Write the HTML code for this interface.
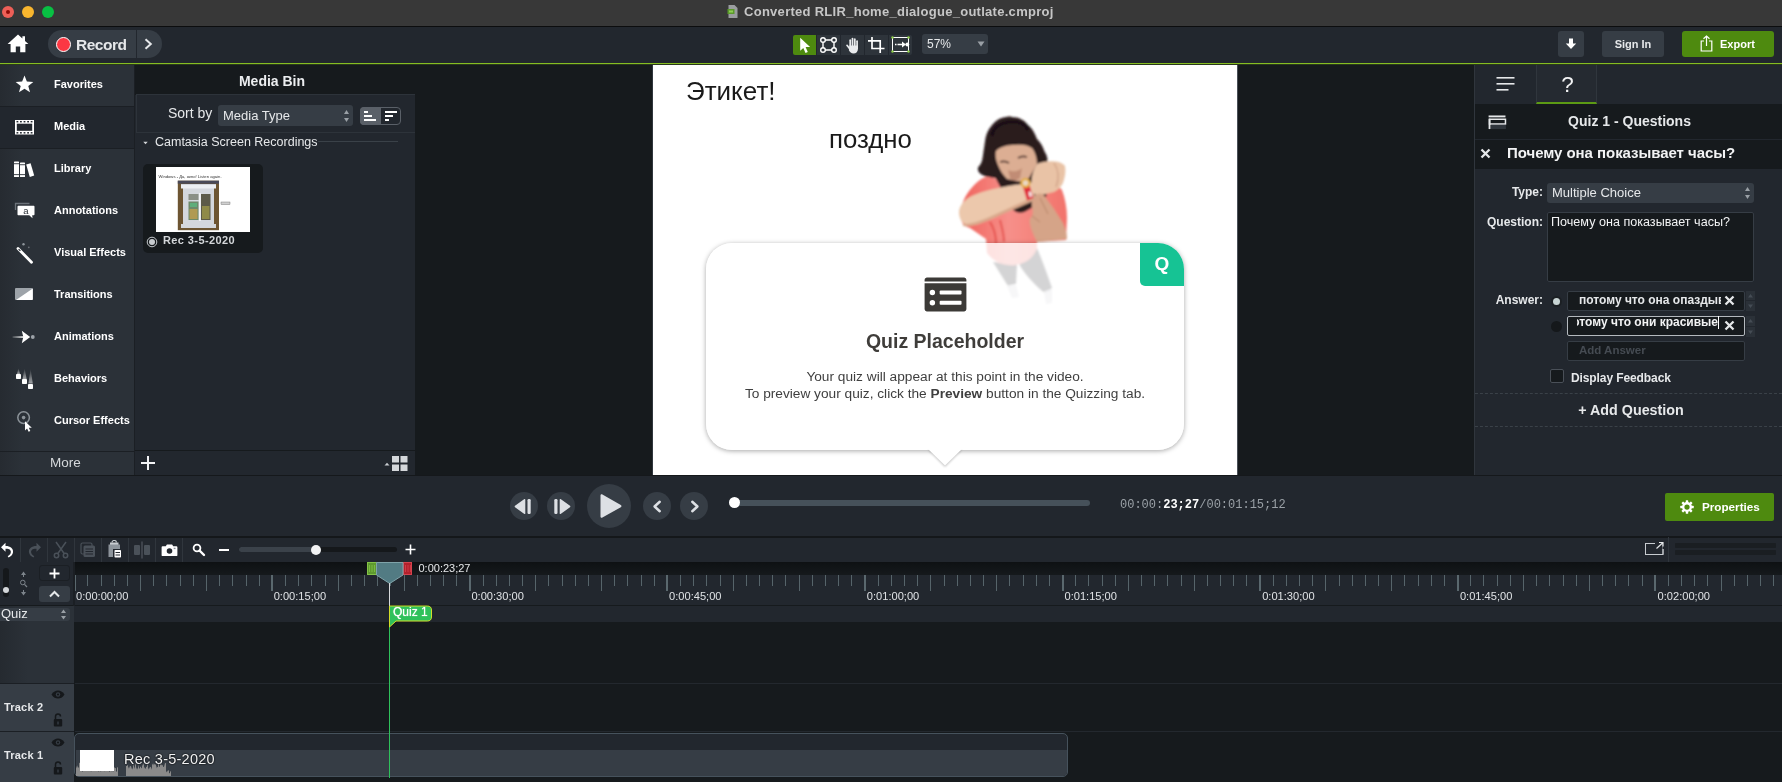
<!DOCTYPE html>
<html lang="en">
<head>
<meta charset="utf-8">
<title>Converted RLIR_home_dialogue_outlate.cmproj</title>
<style>
*{box-sizing:border-box;margin:0;padding:0}
html,body{width:1782px;height:782px;overflow:hidden;background:#22272e}
body{font-family:"Liberation Sans",sans-serif;color:#e8eaec;font-size:12px;position:relative}
.abs{position:absolute}
#app{position:absolute;left:0;top:0;width:1782px;height:782px;overflow:hidden;will-change:transform}
/* title bar */
#titlebar{left:0;top:0;width:1782px;height:26px;background:#383838}
#titleline{left:0;top:26px;width:1782px;height:1px;background:#0c0d0e}
.tl{width:12px;height:12px;border-radius:50%;top:6px}
#title{top:4px;left:744px;font-weight:bold;font-size:13px;color:#c6c6c6;white-space:nowrap;letter-spacing:0.28px}
/* toolbar */
#toolbar{left:0;top:27px;width:1782px;height:36px;background:#22272e}
#greenline{left:0;top:63px;width:1782px;height:2px;background:linear-gradient(#86bd22 0,#86bd22 50%,#2a3a1a 50%,#2a3a1a 100%)}
.btn{background:#363d45;border-radius:3px;color:#e6e8ea;font-weight:bold;font-size:12px;text-align:center}
/* sidebar */
#sidebar{left:0;top:65px;width:134px;height:411px;background:linear-gradient(90deg,#262b31 0,#2b3138 22px)}
.sitem{left:0;width:134px;height:42px;border-top:1px solid #252a30}
.sitem span{position:absolute;left:54px;top:14px;font-weight:bold;font-size:11px;color:#ffffff;white-space:nowrap}
.sitem svg{position:absolute}
.sel{background:#22272e}
/* media bin */
#mediabin{left:134px;top:65px;width:281px;height:411px;background:#22272e}
/* canvas */
#canvasarea{left:415px;top:65px;width:1060px;height:411px;background:#161a1d}
#canvas{left:653px;top:65px;width:584px;height:410px;background:#fff;overflow:hidden}
/* right panel */
#rpanel{left:1475px;top:65px;width:307px;height:411px;background:#22272e}
/* playback */
#playbar{left:0;top:476px;width:1782px;height:60px;background:#22272e}
.circ{border-radius:50%;background:#363d45}
/* timeline */
#tltoolbar{left:0;top:537px;width:1782px;height:25px;background:#22272e}
#timeline{left:0;top:562px;width:1782px;height:220px;background:#161a1d}
.rl{position:absolute;top:29px;font-size:11.100px;color:#e0e3e6;white-space:nowrap}
</style>
</head>
<body>
<div id="app">

<!-- TITLE BAR -->
<div id="titlebar" class="abs"></div>
<div id="titleline" class="abs"></div>
<div class="abs tl" style="left:2px;background:#ee5f57"></div>
<div class="abs" style="left:6px;top:10px;width:4px;height:4px;border-radius:50%;background:#8c0b06"></div>
<div class="abs tl" style="left:22px;background:#f9b62e"></div>
<div class="abs tl" style="left:42px;background:#08c043"></div>
<svg class="abs" style="left:726px;top:3.500px" width="14" height="15" viewBox="0 0 13 15"><path d="M2 1h6l3 3v10H2z" fill="#9a9da0"/><rect x="1" y="5" width="7" height="5" fill="#5a9a2b"/><rect x="2.5" y="6.5" width="4" height="2" fill="#8fce55"/></svg>
<div id="title" class="abs">Converted RLIR_home_dialogue_outlate.cmproj</div>

<!-- TOOLBAR -->
<div id="toolbar" class="abs"></div>
<div id="greenline" class="abs"></div>
<!-- home -->
<svg class="abs" style="left:7px;top:34px" width="22" height="19" viewBox="0 0 22 19"><path d="M11 0.5L0.6 10h3v8.2h5.2v-5.6h4.4v5.6h5.2V10h3L18 6.9V2.2h-2.6v2.3z" fill="#ffffff"/></svg>
<!-- record -->
<div class="abs" style="left:48px;top:30px;width:114px;height:28px;border-radius:14px;background:#363d45"></div>
<div class="abs" style="left:136px;top:30px;width:1px;height:28px;background:#22272e"></div>
<div class="abs" style="left:56px;top:37px;width:15px;height:15px;border-radius:50%;background:#fb3743;border:1.6px solid #fff"></div>
<div class="abs" style="left:76px;top:36px;font-size:15.500px;font-weight:bold;color:#e6e8ea;letter-spacing:-0.500px">Record</div>
<svg class="abs" style="left:144px;top:38px" width="9" height="12" viewBox="0 0 9 12"><path d="M1.5 1.2L6.8 6 1.5 10.8" fill="none" stroke="#e6e8ea" stroke-width="2"/></svg>
<!-- canvas tools -->
<div class="abs" style="left:793px;top:35px;width:23px;height:20px;background:#4e8a0f;border-radius:2px 0 0 2px"></div>
<div class="abs" style="left:817px;top:35px;width:23px;height:20px;background:#2e343b"></div>
<div class="abs" style="left:841px;top:35px;width:23px;height:20px;background:#2e343b"></div>
<div class="abs" style="left:865px;top:35px;width:23px;height:20px;background:#2e343b"></div>
<div class="abs" style="left:889px;top:35px;width:23px;height:20px;background:#2e343b;border-radius:0 2px 2px 0"></div>
<svg class="abs" style="left:799px;top:37px" width="13" height="17" viewBox="0 0 13 17"><path d="M1.2 0.8v13l3.1-2.9 2.2 5 2.3-1-2.2-4.9h4.5z" fill="#fff"/></svg>
<svg class="abs" style="left:819px;top:36px" width="19" height="18" viewBox="0 0 19 18"><g fill="none" stroke="#fff" stroke-width="1.4"><path d="M4 4h11v10H4z"/><circle cx="4" cy="4" r="2.3" fill="#2e343b"/><circle cx="15" cy="4" r="2.3" fill="#2e343b"/><circle cx="4" cy="14" r="2.3" fill="#2e343b"/><circle cx="15" cy="14" r="2.3" fill="#2e343b"/></g></svg>
<svg class="abs" style="left:845px;top:37px" width="16" height="17" viewBox="0 0 16 17"><g stroke="#e9ebed" stroke-width="1.700" stroke-linecap="round" fill="none"><path d="M5.200 9V3.200"/><path d="M7.500 8.500V1.500"/><path d="M9.800 8.500V2.200"/><path d="M12.100 9V4.200"/><path d="M4.500 11.500L2 8.300"/></g><path d="M4.300 8.500h8.700v3c0 3-1.800 5-4.500 5-2.400 0-3.600-1.200-4.600-3.200z" fill="#e9ebed"/></svg>
<svg class="abs" style="left:867px;top:36px" width="19" height="18" viewBox="0 0 19 18"><g fill="none" stroke="#fff" stroke-width="1.7"><path d="M5 1v11.500h12.500"/><path d="M1 4.800h12.200V17"/></g></svg>
<svg class="abs" style="left:890px;top:36px" width="21" height="18" viewBox="0 0 21 18"><rect x="2.500" y="1.500" width="16" height="14" fill="none" stroke="#fff" stroke-width="1"/><g fill="#8fd04a"><circle cx="2.500" cy="1.500" r="1.200"/><circle cx="18.500" cy="1.500" r="1.200"/><circle cx="2.500" cy="15.500" r="1.200"/><circle cx="18.500" cy="15.500" r="1.200"/></g><path d="M5 7.800h1.500v1.400H5zM7.500 7.800h4.500V5.500l4 3-4 3V9.200H7.500z" fill="#fff"/><circle cx="17.300" cy="8.500" r="1.900" fill="#fff"/></svg>
<!-- zoom select -->
<div class="abs" style="left:922px;top:34px;width:66px;height:20px;background:#363d45;border-radius:3px"></div>
<div class="abs" style="left:927px;top:37px;font-size:12px;color:#e6e8ea">57%</div>
<svg class="abs" style="left:977px;top:41px" width="8" height="6" viewBox="0 0 8 6"><path d="M0.500 0.500h7L4 5.500z" fill="#9aa0a6"/></svg>
<!-- right buttons -->
<div class="abs btn" style="left:1558px;top:31px;width:26px;height:26px"></div>
<svg class="abs" style="left:1565px;top:38px" width="12" height="12" viewBox="0 0 12 12"><path d="M4 0.500h4v5h3.200L6 11 0.800 5.500H4z" fill="#fff"/></svg>
<div class="abs btn" style="left:1602px;top:31px;width:62px;height:26px;line-height:27px;font-size:11px">Sign In</div>
<div class="abs btn" style="left:1682px;top:31px;width:92px;height:26px;background:#4e8a0f"></div>
<svg class="abs" style="left:1700px;top:35px" width="13" height="17" viewBox="0 0 13 17"><g fill="none" stroke="#fff" stroke-width="1.2"><path d="M4 6H1.200v10h10.600V6H9"/><path d="M6.500 11V1.200M3.500 3.800l3-2.800 3 2.800"/></g></svg>
<div class="abs" style="left:1720px;top:38px;font-size:11px;font-weight:bold;color:#fff">Export</div>

<!-- SIDEBAR -->
<div id="sidebar" class="abs">
<div class="abs sitem" style="top:-1px;border-top:none"><svg style="left:15px;top:11px" width="19" height="18" viewBox="0 0 20 19"><path d="M10 0.500l2.500 6.400 6.800.4-5.300 4.300 1.800 6.700L10 14.600 4.200 18.300 6 11.600.700 7.300l6.800-.4z" fill="#fff"/></svg><span>Favorites</span></div>
<div class="abs sitem sel" style="top:41px;border-top:1px solid #1b1f24;border-bottom:1px solid #1b1f24;height:43px"><svg style="left:15px;top:13px" width="19" height="14.500" viewBox="0 0 19 15" preserveAspectRatio="none"><path d="M0 0h19v15H0z" fill="#fff"/><path d="M1.800 3.800h15.400v7.400H1.800z" fill="#22272e"/><g fill="#22272e"><rect x="1.500" y="1" width="1.800" height="1.500"/><rect x="5" y="1" width="1.800" height="1.500"/><rect x="8.600" y="1" width="1.800" height="1.500"/><rect x="12.200" y="1" width="1.800" height="1.500"/><rect x="15.700" y="1" width="1.800" height="1.500"/><rect x="1.500" y="12.500" width="1.800" height="1.500"/><rect x="5" y="12.500" width="1.800" height="1.500"/><rect x="8.600" y="12.500" width="1.800" height="1.500"/><rect x="12.200" y="12.500" width="1.800" height="1.500"/><rect x="15.700" y="12.500" width="1.800" height="1.500"/></g></svg><span style="top:13px">Media</span></div>
<div class="abs sitem" style="top:83px;border-top:none"><svg style="left:13px;top:13px" width="22" height="17" viewBox="0 0 22 17"><g fill="#fff"><rect x="1" y="0.500" width="5" height="15.500" rx="0.600"/><rect x="7" y="1.500" width="5" height="14.500" rx="0.600"/><path d="M13.200 3.600l4.400-1.300 3.600 12.300-4.400 1.400z"/></g><g fill="#2b3138"><rect x="1" y="2.300" width="5" height="0.900"/><rect x="1" y="13.200" width="5" height="0.900"/><rect x="7" y="3.300" width="5" height="0.900"/><rect x="7" y="13.200" width="5" height="0.900"/></g></svg><span>Library</span></div>
<div class="abs sitem" style="top:125px;border-top:none"><svg style="left:14px;top:12px" width="22" height="18" viewBox="0 0 22 18"><path d="M1.500 8V1.500h14" fill="none" stroke="#6b7279" stroke-width="1.300"/><path d="M4.500 3.800h15c.6 0 1 .4 1 1v7.400c0 .6-.4 1-1 1h-1.300l.3 3-3.300-3H4.500c-.6 0-1-.4-1-1V4.800c0-.6.4-1 1-1z" fill="#fff"/><text x="9.200" y="11.800" font-family="Liberation Sans,sans-serif" font-size="9.500" fill="#2b3138">a</text></svg><span>Annotations</span></div>
<div class="abs sitem" style="top:167px;border-top:none"><svg style="left:15px;top:10px" width="20" height="22" viewBox="0 0 20 22"><path d="M3 6.500l13.500 13.800" stroke="#fff" stroke-width="2.800" stroke-linecap="round"/><path d="M3.600 7.100l1.800 1.800" stroke="#2b3138" stroke-width="1.200"/><circle cx="8.500" cy="2.300" r="1.200" fill="#8d949a"/><circle cx="13.800" cy="5.300" r="0.900" fill="#6b7279"/></svg><span>Visual Effects</span></div>
<div class="abs sitem" style="top:209px;border-top:none"><svg style="left:15px;top:14px" width="19" height="13" viewBox="0 0 19 13"><rect x="0" y="0" width="17.800" height="12" rx="1" fill="#9da3a9"/><path d="M17.800 0.500v10.500c0 .6-.4 1-1 1H1z" fill="#fff"/></svg><span>Transitions</span></div>
<div class="abs sitem" style="top:251px;border-top:none"><svg style="left:12px;top:14px" width="24" height="14" viewBox="0 0 24 14"><defs><linearGradient id="ag" x1="0" x2="1"><stop offset="0" stop-color="#fff" stop-opacity="0.150"/><stop offset="1" stop-color="#fff"/></linearGradient></defs><rect x="0.500" y="6.200" width="12" height="1.700" fill="url(#ag)"/><path d="M9.800 0.800L18.200 7l-8.400 6.200 1.500-6.200z" fill="#fff"/><circle cx="20.800" cy="7" r="1.900" fill="#9da3a9"/></svg><span>Animations</span></div>
<div class="abs sitem" style="top:293px;border-top:none"><svg style="left:14px;top:9px" width="22" height="24" viewBox="0 0 22 24"><defs><linearGradient id="bg1" x1="0" x2="0" y1="0" y2="1"><stop offset="0" stop-color="#fff" stop-opacity="0"/><stop offset="1" stop-color="#fff" stop-opacity="0.550"/></linearGradient></defs><path d="M4.500 1l1.500 6h-3z" fill="url(#bg1)"/><path d="M10.600 1l2 11h-4z" fill="url(#bg1)"/><path d="M16.600 1.500l2.200 15h-4.400z" fill="url(#bg1)"/><rect x="2" y="7" width="5" height="5" rx="0.800" fill="#fff"/><rect x="8" y="12" width="5" height="5" rx="0.800" fill="#fff"/><rect x="14" y="17" width="5" height="5" rx="0.800" fill="#fff"/></svg><span>Behaviors</span></div>
<div class="abs sitem" style="top:335px;border-top:none"><svg style="left:15px;top:9px" width="20" height="24" viewBox="0 0 20 24"><circle cx="8.600" cy="8.600" r="5.800" fill="none" stroke="#8d949a" stroke-width="1.500"/><circle cx="8.600" cy="8.600" r="1.800" fill="#8d949a"/><path d="M10 12.200v9.300l2.100-2 1.500 3.300 1.700-.7-1.500-3.300h3z" fill="#fff"/></svg><span>Cursor Effects</span></div>
<div class="abs" style="left:0;top:386px;width:134px;height:1px;background:#1b1f24"></div>
<div class="abs" style="left:50px;top:390px;font-size:13.500px;color:#d4d7da">More</div>
</div>

<!-- MEDIA BIN -->
<div id="mediabin" class="abs">
<div class="abs" style="left:0;top:0;width:281px;height:30px;background:#161a1d"></div>
<div class="abs" style="left:0;top:8px;width:276px;text-align:center;font-weight:bold;font-size:14px;color:#eceef0">Media Bin</div>
<div class="abs" style="left:2px;top:29px;width:279px;height:39px;border:1px solid #2d333a;border-right:none;background:#22272e"></div>
<div class="abs" style="left:34px;top:40px;font-size:14px;color:#e6e8ea">Sort by</div>
<div class="abs" style="left:84px;top:40px;width:135px;height:21px;background:#363d45;border-radius:3px"></div>
<div class="abs" style="left:89px;top:43px;font-size:13px;color:#e6e8ea">Media Type</div>
<svg class="abs" style="left:209px;top:44px" width="7" height="14" viewBox="0 0 7 14"><path d="M3.500 1L6 5H1zM3.500 13L6 9H1z" fill="#9aa0a6"/></svg>
<div class="abs" style="left:226px;top:42px;width:41px;height:18px;border-radius:4px;border:1px solid #5a6068;background:#22272e"></div>
<div class="abs" style="left:226px;top:42px;width:21px;height:18px;border-radius:4px 0 0 4px;background:#5a6068"></div>
<svg class="abs" style="left:230px;top:46px" width="13" height="11" viewBox="0 0 13 11"><g fill="#fff"><rect x="0" y="0" width="4" height="2"/><rect x="0" y="4" width="8" height="2"/><rect x="0" y="8" width="12" height="2"/></g></svg>
<svg class="abs" style="left:251px;top:46px" width="13" height="11" viewBox="0 0 13 11"><g fill="#fff"><rect x="0" y="0" width="12" height="2"/><rect x="0" y="4" width="8" height="2"/><rect x="0" y="8" width="4" height="2"/></g></svg>
<svg class="abs" style="left:8.500px;top:76px" width="5" height="4" viewBox="0 0 5 4"><path d="M0.300 0.800h4.400L2.500 3.300z" fill="#d4d7da"/></svg>
<div class="abs" style="left:21px;top:70px;font-size:12.500px;color:#e6e8ea;white-space:nowrap">Camtasia Screen Recordings</div>
<div class="abs" style="left:184px;top:76px;width:80px;height:1px;background:#3a4148"></div>
<div class="abs" style="left:9px;top:99px;width:120px;height:89px;border-radius:5px;background:#161a1d"></div>
<div class="abs" style="left:22px;top:102px;width:94px;height:65px;background:#fff"></div>
<div class="abs" style="left:24.500px;top:109px;font-size:4.200px;color:#333;white-space:nowrap">Windows - Да, окно! Listen again.</div>
<svg class="abs" style="left:43px;top:115px" width="56" height="52" viewBox="177 180 56 52">
<defs><filter id="tb" x="-5%" y="-5%" width="110%" height="110%"><feGaussianBlur stdDeviation="0.350"/></filter></defs>
<g filter="url(#tb)">
<rect x="177.800" y="180.700" width="41.200" height="49.500" fill="#6d5532"/>
<rect x="177.800" y="180.700" width="41.200" height="3" fill="#4a4a58"/>
<path d="M181 184h35v4h-2v36h2v4h-35v-4h2v-36h-2z" fill="#d4d7dd"/>
<rect x="181" y="185" width="35" height="3.500" fill="#eceef2"/>
<rect x="188.500" y="194" width="10" height="6" fill="#8a8f86"/>
<rect x="188.500" y="201.500" width="10" height="18.500" fill="#6d8a6a"/>
<rect x="201" y="194" width="9.500" height="26" fill="#5b5a48"/>
<rect x="189.500" y="209" width="8" height="10" fill="#b09a52"/>
<rect x="202" y="206" width="7.500" height="13" fill="#8f8a4a"/>
<rect x="190" y="203" width="7" height="4" fill="#5fae7a"/>
<rect x="199" y="193" width="1.800" height="28" fill="#f2f3f6"/>
</g>
<rect x="221" y="202" width="9" height="2.600" fill="#d0d0d0" stroke="#666" stroke-width="0.400"/>
</svg>
<svg class="abs" style="left:12px;top:171px" width="12" height="12" viewBox="0 0 12 12"><circle cx="6" cy="6" r="4.800" fill="none" stroke="#c8ccd0" stroke-width="1"/><circle cx="6" cy="6" r="3" fill="#c8ccd0"/></svg>
<div class="abs" style="left:29px;top:169px;font-size:11px;font-weight:bold;color:#d4d7da;white-space:nowrap;letter-spacing:0.400px">Rec 3-5-2020</div>
<div class="abs" style="left:0;top:385px;width:281px;height:1px;background:#161a1d"></div>
<svg class="abs" style="left:7px;top:391px" width="14" height="14" viewBox="0 0 14 14"><path d="M7 0v14M0 7h14" stroke="#f2f3f5" stroke-width="2"/></svg>
<svg class="abs" style="left:250px;top:390px" width="24" height="17" viewBox="0 0 24 17"><path d="M0.500 10.500l2.500-2.800 2.500 2.800z" fill="#c8ccd0"/><g fill="#d4d7da"><rect x="8" y="1" width="7" height="6.500"/><rect x="16.500" y="1" width="7" height="6.500"/><rect x="8" y="9.500" width="7" height="6.500"/><rect x="16.500" y="9.500" width="7" height="6.500"/></g></svg>
</div>

<div class="abs" style="left:134px;top:65px;width:1px;height:411px;background:#1b1f24"></div>
<!-- CANVAS -->
<div id="canvasarea" class="abs"></div>
<div id="canvas" class="abs">
<div class="abs" style="left:33px;top:11px;font-size:26px;color:#1a1a1a;white-space:nowrap">Этикет!</div>
<div class="abs" style="left:176px;top:60px;font-size:25.800px;color:#1a1a1a;white-space:nowrap">поздно</div>
<!-- woman figure -->
<svg class="abs" style="left:287px;top:35px" width="160" height="215" viewBox="940 100 160 215">
<defs><filter id="bl" x="-10%" y="-10%" width="120%" height="120%"><feGaussianBlur stdDeviation="0.800"/></filter>
<linearGradient id="shg" x1="0" x2="1"><stop offset="0" stop-color="#f0625c"/><stop offset="0.450" stop-color="#f7908a"/><stop offset="1" stop-color="#f2736b"/></linearGradient></defs>
<g filter="url(#bl)">
<!-- pants -->
<path d="M993 262l24 2-1 20-8 2c-5-8-10-16-15-24zM1019 264l18-16c6 14 10 26 15 40l-6 6c-10-8-20-18-27-30z" fill="#3e3e42"/>
<path d="M1007 286l9-1 3 12-7 1zM1044 292l8-3 0 14-6 1z" fill="#d8d8de"/>
<!-- shirt -->
<path d="M985 177c6-2 10 0 15 6l30 8 20-6c6 0 10 2 12 5 3 8 5 18 5 28l-1 22-29 2 0 6c-4 10-12 16-24 17-12 0-20-4-26-12l-1-14-16-11c-4-1-7-3-8-6-2-6-1-14 1-20 4-10 12-20 22-25z" fill="url(#shg)"/>
<path d="M990 222c4 6 6 14 6 22M1000 220c2 8 4 14 4 22" stroke="#e0403c" stroke-width="2" fill="none" opacity="0.700"/>
<!-- hair -->
<path d="M1011 117c8 0 13 3 17 8 5 4 7 9 9 14 4 4 6 8 7.500 12.500 2 3 3 6 3 9.500 0 4-1 7-4 9l3 26c-8 6-14 12-22 16-6 2-10 0-13-4l-16-30c-6-1-10-1-14-3.500-3-2-4-4-3.500-7 2-2 4-5 4.500-9l2.500-17c1-7 3-12 7.500-17 5-6 11-8 19-8z" fill="#2c1a1d"/>
<!-- face -->
<path d="M996 151c5-5 12-6 19-6 7-1 13 0 17 3 3 4 5 10 5 16l-8 14c-4 3-8 4-12 3l-10-2c-4-4-7-9-9-14-2-5-3-10-2-14z" fill="#dcae93"/>
<path d="M1000 162c3-1 6-1 9 1M1018 158c3-2 6-2 9-1" stroke="#4a2f2a" stroke-width="1.600" fill="none"/>
<path d="M1008 170c4 2 10 2 14-2l-2 10c-4 3-8 3-10 0z" fill="#c18c74"/>
<!-- headband -->
<path d="M992 136c1-8 8-13 18-14 8-1 15 2 18 8" fill="none" stroke="#141012" stroke-width="3.200"/>
<!-- arm -->
<path d="M1034 182c-12 2-26 4-38 6.500-10 2-20 5-27 9-6 4-10 9-10 15 0 7 4 12 10 13 6 0 12-2 18-5 8-2 14-6 19-10l28-13z" fill="#ecc8ac"/>
<path d="M963 224c8 0 16-3 24-6l20-9 26-12 0 4-46 20c-8 3-16 6-24 5z" fill="#d9a98c"/>
<!-- fist -->
<path d="M1037 164c5-2 11-3 17-2.500 5 0 9 2 11 4.500 1 5 0 11-2 17-2 4-5 7-9 9l-17 4c-3-2-5-5-5.500-9.500-.5-8 1-16 5.500-22.500z" fill="#e9c3a6"/>
<path d="M1054 163c4 6 6 14 2 24" stroke="#cfa085" stroke-width="1.200" fill="none"/>
<!-- lower hand -->
<path d="M1034 196c3-3 6-3 9-2l11 15 9 14c2 5 4 10 4 16l-30 3c-3-6-6-12-7-18-1-4 0-6 2-8 1-3 1-6 0-9-1-4 0-8 2-11z" fill="#d5a488"/>
<path d="M1040 198l8 16M1032 216l8 6" stroke="#b78467" stroke-width="1" fill="none"/>
<!-- watch -->
<path d="M1023 187l6.500-2 4 13-6.500 2.500z" fill="#e02b3a"/>
<path d="M1028.500 192l2.500-.5 1 5-2.500.5z" fill="#f4f0f0"/>
<circle cx="1025.500" cy="183" r="5" fill="#e5ae3a"/><circle cx="1025.500" cy="183" r="2.700" fill="#ead9c8"/>
</g>
</svg>
<!-- popup -->
<div class="abs" style="left:53px;top:178px;width:478px;height:207px;border-radius:26px;background:rgba(255,255,255,0.780);box-shadow:0 1px 5px rgba(0,0,0,0.350)"></div>
<svg class="abs" style="left:270px;top:384px" width="44" height="20" viewBox="0 0 44 20"><defs><filter id="ts"><feGaussianBlur stdDeviation="1.200"/></filter></defs><path d="M5 1h34L22 18z" fill="rgba(0,0,0,0.220)" filter="url(#ts)"/><path d="M5 0h34L22 16.500z" fill="#fff"/></svg>
<div class="abs" style="left:487px;top:178px;width:44px;height:43px;background:#16c394;border-radius:0 26px 0 5px"></div>
<div class="abs" style="left:487px;top:188px;width:44px;text-align:center;font-size:19px;font-weight:bold;color:#fff">Q</div>
<svg class="abs" style="left:270.500px;top:212px" width="43" height="35" viewBox="0 0 44 36"><path d="M3 0.500h38c1.400 0 2.500 1.100 2.500 2.500v1.500h-43V3c0-1.400 1.100-2.500 2.500-2.500z" fill="#3c3a37"/><path d="M0.500 6.500h43V33c0 1.400-1.100 2.500-2.500 2.500H3c-1.400 0-2.500-1.100-2.500-2.500z" fill="#3c3a37"/><circle cx="8.500" cy="16" r="2.800" fill="#fff"/><circle cx="8.500" cy="26.500" r="2.800" fill="#fff"/><rect x="16" y="14" width="22.500" height="4" rx="1" fill="#fff"/><rect x="16" y="24.500" width="22.500" height="4" rx="1" fill="#fff"/></svg>
<div class="abs" style="left:53px;top:265px;width:478px;text-align:center;font-size:19.500px;font-weight:bold;color:#3f3d3a;white-space:nowrap">Quiz Placeholder</div>
<div class="abs" style="left:53px;top:304px;width:478px;text-align:center;font-size:13.700px;line-height:16.500px;color:#3f3f3f;white-space:nowrap">Your quiz will appear at this point in the video.<br>To preview your quiz, click the <b>Preview</b> button in the Quizzing tab.</div>
</div>
<div class="abs" style="left:652px;top:65px;width:1px;height:411px;background:#30363d"></div>
<div class="abs" style="left:1237px;top:65px;width:1px;height:411px;background:#4a5058"></div>

<!-- RIGHT PANEL -->
<div id="rpanel" class="abs">
<!-- tabs -->
<div class="abs" style="left:60.500px;top:0;width:61px;height:39px;background:#252a31;border-left:1px solid #30363d;border-right:1px solid #30363d;border-bottom:2px solid #5c9a14"></div>
<svg class="abs" style="left:21px;top:11px" width="20" height="16" viewBox="0 0 20 16"><g fill="#e6e8ea"><rect x="0.500" y="1" width="18" height="1.600"/><rect x="0.500" y="7" width="18" height="1.600"/><rect x="0.500" y="13" width="12" height="1.600"/></g></svg>
<div class="abs" style="left:62px;top:7px;width:61px;text-align:center;font-size:22.500px;color:#f2f3f4">?</div>
<!-- header -->
<div class="abs" style="left:0;top:39px;width:307px;height:35px;background:#161a1d"></div>
<svg class="abs" style="left:13px;top:50px" width="19" height="15" viewBox="0 0 20 16"><path d="M0.500 0.500h18v2h-18z" fill="#e6e8ea"/><path d="M1.500 4.500h17v5h-17z" fill="none" stroke="#e6e8ea" stroke-width="1.600"/><path d="M0.500 4h2v11h-2z" fill="#e6e8ea"/><path d="M3 10.500h16v4.500H3z" fill="#30363d"/></svg>
<div class="abs" style="left:0;top:48px;width:309px;text-align:center;font-weight:bold;font-size:14px;color:#e6e8ea">Quiz 1 - Questions</div>
<!-- question header -->
<div class="abs" style="left:0;top:75px;width:307px;height:29px;background:#161a1d"></div>
<svg class="abs" style="left:5px;top:83px" width="11" height="11" viewBox="0 0 11 11"><path d="M1.500 1.500l8 8M9.500 1.500l-8 8" stroke="#e6e8ea" stroke-width="2.300"/></svg>
<div class="abs" style="left:32px;top:79px;font-weight:bold;font-size:15px;color:#f2f3f4;white-space:nowrap;letter-spacing:-0.050px">Почему она показывает часы?</div>
<!-- type -->
<div class="abs" style="left:0;top:120px;width:68px;text-align:right;font-weight:bold;font-size:12px;color:#e6e8ea">Type:</div>
<div class="abs" style="left:72px;top:118px;width:207px;height:20px;background:#363d45;border-radius:3px"></div>
<div class="abs" style="left:77px;top:120px;font-size:13px;color:#e6e8ea">Multiple Choice</div>
<svg class="abs" style="left:269px;top:121px" width="7" height="14" viewBox="0 0 7 14"><path d="M3.500 1L6 5H1zM3.500 13L6 9H1z" fill="#9aa0a6"/></svg>
<!-- question -->
<div class="abs" style="left:0;top:150px;width:68px;text-align:right;font-weight:bold;font-size:12px;color:#e6e8ea">Question:</div>
<div class="abs" style="left:72px;top:147px;width:207px;height:70px;background:#161a1d;border:1px solid #363d45;border-radius:2px"></div>
<div class="abs" style="left:76px;top:150px;font-size:12.600px;color:#f2f3f4;white-space:nowrap">Почему она показывает часы?</div>
<!-- answers -->
<div class="abs" style="left:0;top:228px;width:68px;text-align:right;font-weight:bold;font-size:12px;color:#e6e8ea">Answer:</div>
<div class="abs" style="left:75.500px;top:230.500px;width:11px;height:11px;border-radius:50%;background:#1c2024"></div>
<div class="abs" style="left:77.500px;top:232.500px;width:7px;height:7px;border-radius:50%;background:#c8d4d4"></div>
<div class="abs" style="left:92px;top:226px;width:178px;height:20px;background:#161a1d;border:1px solid #363d45;border-radius:2px"></div>
<div class="abs" style="left:104px;top:228px;width:142px;overflow:hidden;font-weight:bold;font-size:12px;color:#e6e8ea;white-space:nowrap">потому что она опаздывает</div>
<svg class="abs" style="left:249px;top:230px" width="11" height="11" viewBox="0 0 11 11"><path d="M1.500 1.500l8 8M9.500 1.500l-8 8" stroke="#e6e8ea" stroke-width="2.300"/></svg>
<div class="abs" style="left:271px;top:226px;width:9px;height:9px;background:#2b3138"></div>
<div class="abs" style="left:271px;top:236px;width:9px;height:10px;background:#2b3138"></div>
<svg class="abs" style="left:272px;top:228px" width="7" height="16" viewBox="0 0 7 16"><path d="M3.500 1L6 4.500H1zM3.500 15L6 11.500H1z" fill="#454c54"/></svg>
<div class="abs" style="left:75.500px;top:255.500px;width:11px;height:11px;border-radius:50%;background:#15181b"></div>
<div class="abs" style="left:92px;top:251px;width:178px;height:20px;background:#161a1d;border:1px solid #b4b9be;border-radius:2px"></div>
<div class="abs" style="left:102px;top:250px;width:141px;overflow:hidden;font-weight:bold;font-size:12px;color:#f2f3f4;white-space:nowrap;direction:rtl"><span style="direction:ltr;unicode-bidi:bidi-override">потому что они красивые</span></div>
<div class="abs" style="left:243px;top:251px;width:1px;height:13px;background:#fff"></div>
<svg class="abs" style="left:249px;top:255px" width="11" height="11" viewBox="0 0 11 11"><path d="M1.500 1.500l8 8M9.500 1.500l-8 8" stroke="#e6e8ea" stroke-width="2.300"/></svg>
<div class="abs" style="left:271px;top:251px;width:9px;height:10px;background:#2b3138"></div>
<div class="abs" style="left:271px;top:262px;width:9px;height:10px;background:#2b3138"></div>
<svg class="abs" style="left:272px;top:253px" width="7" height="17" viewBox="0 0 7 17"><path d="M3.500 1L6 4.500H1zM3.500 16L6 12.500H1z" fill="#454c54"/></svg>
<div class="abs" style="left:92px;top:276px;width:178px;height:20px;background:#161a1d;border:1px solid #363d45;border-radius:2px"></div>
<div class="abs" style="left:104px;top:279px;font-weight:bold;font-size:11.500px;color:#454b52;white-space:nowrap">Add Answer</div>
<div class="abs" style="left:75px;top:304px;width:14px;height:14px;background:#161a1d;border:1px solid #4a5058;border-radius:2px"></div>
<div class="abs" style="left:96px;top:306px;font-weight:bold;font-size:12px;color:#e6e8ea;white-space:nowrap;letter-spacing:-0.100px">Display Feedback</div>
<div class="abs" style="left:0;top:328px;width:307px;height:0;border-top:1px dashed #3a4148"></div>
<div class="abs" style="left:0;top:337px;width:312px;text-align:center;font-weight:bold;font-size:14.300px;color:#e6e8ea">+ Add Question</div>
<div class="abs" style="left:0;top:361px;width:307px;height:0;border-top:1px dashed #3a4148"></div>
</div>

<div class="abs" style="left:1474px;top:65px;width:1px;height:411px;background:#30363d"></div>
<div class="abs" style="left:0;top:475px;width:1782px;height:1.500px;background:#15181b"></div>
<!-- PLAYBACK BAR -->
<div id="playbar" class="abs">
<div class="abs" style="left:0;top:60px;width:1782px;height:2px;background:#14171a"></div>
<div class="abs circ" style="left:510px;top:16px;width:28px;height:28px"></div>
<div class="abs circ" style="left:547px;top:16px;width:28px;height:28px"></div>
<div class="abs circ" style="left:587px;top:8px;width:44px;height:44px"></div>
<div class="abs circ" style="left:643px;top:16px;width:28px;height:28px"></div>
<div class="abs circ" style="left:680px;top:16px;width:28px;height:28px"></div>
<svg class="abs" style="left:514px;top:21.500px" width="20" height="17" viewBox="0 0 20 17"><path d="M11.300 1.600v13.800c0 .5-.5.800-.9.500L1 9.200c-.5-.3-.5-1 0-1.400l9.400-6.700c.4-.3.900 0 .9.500z" fill="#dde0e4"/><rect x="13.500" y="1" width="3.200" height="15" rx="1.200" fill="#dde0e4"/></svg>
<svg class="abs" style="left:551.500px;top:21.500px" width="20" height="17" viewBox="0 0 20 17"><rect x="2.300" y="1" width="3.200" height="15" rx="1.200" fill="#dde0e4"/><path d="M7.700 1.600v13.800c0 .5.500.800.900.500L18 9.200c.5-.3.500-1 0-1.400L8.600 1.100c-.4-.3-.9 0-.9.500z" fill="#dde0e4"/></svg>
<svg class="abs" style="left:599px;top:17px" width="24" height="26" viewBox="0 0 24 26"><path d="M1.500 2.500v21c0 1.100 1 1.600 1.900 1.100L21.800 14.200c.9-.5.900-1.800 0-2.300L3.400 1.400c-.9-.5-1.900 0-1.900 1.100z" fill="#dde0e4"/></svg>
<svg class="abs" style="left:651.500px;top:23.500px" width="10" height="13" viewBox="0 0 11 14"><path d="M8.500 1.800L2.800 7l5.700 5.200" fill="none" stroke="#dde0e4" stroke-width="2.700" stroke-linecap="round" stroke-linejoin="round"/></svg>
<svg class="abs" style="left:689.500px;top:23.500px" width="10" height="13" viewBox="0 0 11 14"><path d="M2.500 1.800L8.200 7l-5.700 5.200" fill="none" stroke="#dde0e4" stroke-width="2.700" stroke-linecap="round" stroke-linejoin="round"/></svg>
<div class="abs" style="left:734px;top:24px;width:356px;height:6px;border-radius:3px;background:#46515a"></div>
<div class="abs" style="left:728.500px;top:21px;width:11px;height:11px;border-radius:50%;background:#fff"></div>
<div class="abs" style="left:1120px;top:22px;font-family:'Liberation Mono',monospace;font-size:12px;color:#9aa0a6;white-space:nowrap">00:00:<b style="color:#fff">23;27</b>/00:01:15;12</div>
<div class="abs" style="left:1665px;top:17px;width:109px;height:28px;background:#4e8a0f;border-radius:2px"></div>
<svg class="abs" style="left:1680px;top:24px" width="14" height="14" viewBox="0 0 16 16"><g fill="#fff"><circle cx="8" cy="8" r="5.600"/><rect x="6.600" y="0.300" width="2.800" height="15.400" rx="0.600"/><rect x="6.600" y="0.300" width="2.800" height="15.400" rx="0.600" transform="rotate(45 8 8)"/><rect x="6.600" y="0.300" width="2.800" height="15.400" rx="0.600" transform="rotate(90 8 8)"/><rect x="6.600" y="0.300" width="2.800" height="15.400" rx="0.600" transform="rotate(135 8 8)"/></g><circle cx="8" cy="8" r="3" fill="#4e8a0f"/></svg>
<div class="abs" style="left:1702px;top:24px;font-weight:bold;font-size:11.700px;color:#fff">Properties</div>
</div>

<!-- TIMELINE -->
<div id="tltoolbar" class="abs">
<div class="abs" style="left:0;top:-1px;width:1782px;height:1.500px;background:#14171a"></div>
<div class="abs" style="left:20px;top:1px;width:1px;height:24px;background:#30363d"></div>
<div class="abs" style="left:47px;top:1px;width:1px;height:24px;background:#30363d"></div>
<div class="abs" style="left:74px;top:1px;width:1px;height:24px;background:#30363d"></div>
<div class="abs" style="left:101px;top:1px;width:1px;height:24px;background:#30363d"></div>
<div class="abs" style="left:128px;top:1px;width:1px;height:24px;background:#30363d"></div>
<div class="abs" style="left:155px;top:1px;width:1px;height:24px;background:#30363d"></div>
<div class="abs" style="left:182px;top:1px;width:1px;height:24px;background:#30363d"></div>
<svg class="abs" style="left:0px;top:5px" width="15" height="16" viewBox="0 0 15 16"><path d="M5.500 0.800L1 5.300l4.500 4.500V6.800c3.500-.2 6 1.200 5.200 4.200-.4 1.400-1.500 2.500-3 3.200l.9 1.300c2.400-1 4-2.800 4.400-5 .7-4.300-3-6.700-7.500-6.600z" fill="#fff"/></svg>
<svg class="abs" style="left:27px;top:5px" width="15" height="16" viewBox="0 0 15 16"><path d="M9.500 0.800L14 5.300 9.500 9.800V6.800c-3.500-.2-6 1.200-5.200 4.200.4 1.400 1.500 2.500 3 3.200l-.9 1.300c-2.400-1-4-2.800-4.400-5-.7-4.300 3-6.700 7.500-6.600z" fill="#4a5159"/></svg>
<svg class="abs" style="left:53px;top:4px" width="16" height="18" viewBox="0 0 16 18"><g fill="none" stroke="#4a5159" stroke-width="1.500"><path d="M3 1l8.500 12M13 1L4.500 13"/><circle cx="3.500" cy="14.500" r="2.200"/><circle cx="12.500" cy="14.500" r="2.200"/></g></svg>
<svg class="abs" style="left:80px;top:5px" width="16" height="16" viewBox="0 0 16 16"><rect x="1" y="1" width="11" height="11" rx="1.500" fill="none" stroke="#4a5159" stroke-width="1.200"/><rect x="3.500" y="3.500" width="11.500" height="11.500" rx="1.500" fill="#4a5159"/><g stroke="#22272e" stroke-width="1.200"><path d="M5.500 7h7.500M5.500 9.500h7.500M5.500 12h7.500"/></g></svg>
<svg class="abs" style="left:107px;top:3px" width="16" height="19" viewBox="0 0 16 19"><path d="M5 2.500c0-1 1-2 2.200-2s2.200 1 2.200 2" fill="none" stroke="#c8ccd0" stroke-width="1.200"/><rect x="3" y="2.500" width="8.500" height="3" fill="#c8ccd0"/><path d="M1.500 4.500h11.500v4.500H6v8H1.500z" fill="#8d949b"/><rect x="6.500" y="9" width="8.500" height="9.500" rx="1" fill="#22272e"/><rect x="7.500" y="10" width="6.500" height="7.500" rx="0.800" fill="#fff"/><path d="M8.500 12.500h4.500M8.500 15h4.500" stroke="#22272e" stroke-width="1.100"/></svg>
<svg class="abs" style="left:133px;top:4px" width="18" height="18" viewBox="0 0 18 18"><rect x="1" y="4" width="6" height="10" rx="1" fill="#4a5159"/><rect x="11" y="4" width="6" height="10" rx="1" fill="#4a5159"/><rect x="8.300" y="0.500" width="1.400" height="17" fill="#4a5159"/></svg>
<svg class="abs" style="left:160.500px;top:6.500px" width="17" height="13" viewBox="0 0 18 14"><path d="M1.500 2.500h3.500L6.200 0.500h5.600L13 2.500h3.500c.6 0 1 .4 1 1V12c0 .6-.4 1-1 1h-15c-.6 0-1-.4-1-1V3.500c0-.6.400-1 1-1z" fill="#fff"/><circle cx="9" cy="7.500" r="3" fill="#22272e"/><rect x="13.500" y="4" width="2" height="1.500" fill="#8d949b"/></svg>
<svg class="abs" style="left:192px;top:6px" width="14" height="14" viewBox="0 0 14 14"><circle cx="5" cy="5" r="3.400" fill="none" stroke="#fff" stroke-width="1.800"/><path d="M7.500 7.500l4.500 4.500" stroke="#fff" stroke-width="2.400" stroke-linecap="round"/></svg>
<div class="abs" style="left:219px;top:11.500px;width:10px;height:2px;background:#fff"></div>
<div class="abs" style="left:239px;top:10px;width:158px;height:5px;border-radius:3px;background:#15181b"></div>
<div class="abs" style="left:239px;top:10px;width:76px;height:5px;border-radius:3px;background:#3b424a"></div>
<div class="abs" style="left:310.500px;top:7.500px;width:10px;height:10px;border-radius:50%;background:#f2f3f4"></div>
<svg class="abs" style="left:405px;top:7px" width="11" height="11" viewBox="0 0 11 11"><path d="M5.500 0.500v10M0.500 5.500h10" stroke="#fff" stroke-width="1.600"/></svg>
<svg class="abs" style="left:1644px;top:4px" width="22" height="15" viewBox="0 0 22 15"><rect x="1.500" y="2.500" width="17.500" height="11" fill="none" stroke="#c8ccd0" stroke-width="1"/><path d="M11 2h9v6" stroke="#22272e" stroke-width="2.500" fill="none"/><path d="M19 8V13.500" stroke="#c8ccd0" stroke-width="1"/><path d="M12.500 7.500l6-5.500M15 1.500h4v4" fill="none" stroke="#e6e8ea" stroke-width="1.200"/></svg>
<div class="abs" style="left:1668px;top:0;width:1px;height:25px;background:#30363d"></div>
<div class="abs" style="left:1675px;top:6px;width:101px;height:5px;background:#1a1e22;border-radius:1px"></div>
<div class="abs" style="left:1675px;top:13px;width:101px;height:5px;background:#1a1e22;border-radius:1px"></div>
</div>
<div id="timeline" class="abs">
<div class="abs" style="left:0;top:0;width:74px;height:44px;background:#22272e"></div>
<div class="abs" style="left:74px;top:0;width:1708px;height:13px;background:linear-gradient(#0e1113,#15191c)"></div>
<div class="abs" style="left:74px;top:13px;width:1708px;height:31px;background:#22272e"></div>
<svg class="abs" style="left:74px;top:13px" width="1708" height="16" viewBox="0 0 1708 16" shape-rendering="crispEdges"><rect x="0" y="0" width="2" height="16" fill="#5a686e"/><rect x="13" y="0" width="1" height="11" fill="#56646a"/><rect x="27" y="0" width="1" height="11" fill="#56646a"/><rect x="40" y="0" width="1" height="11" fill="#56646a"/><rect x="53" y="0" width="1" height="11" fill="#56646a"/><rect x="66" y="0" width="1" height="16" fill="#56646a"/><rect x="79" y="0" width="1" height="11" fill="#56646a"/><rect x="92" y="0" width="1" height="11" fill="#56646a"/><rect x="106" y="0" width="1" height="11" fill="#56646a"/><rect x="119" y="0" width="1" height="11" fill="#56646a"/><rect x="132" y="0" width="1" height="16" fill="#56646a"/><rect x="145" y="0" width="1" height="11" fill="#56646a"/><rect x="158" y="0" width="1" height="11" fill="#56646a"/><rect x="172" y="0" width="1" height="11" fill="#56646a"/><rect x="185" y="0" width="1" height="11" fill="#56646a"/><rect x="197" y="0" width="2" height="16" fill="#5a686e"/><rect x="211" y="0" width="1" height="11" fill="#56646a"/><rect x="224" y="0" width="1" height="11" fill="#56646a"/><rect x="237" y="0" width="1" height="11" fill="#56646a"/><rect x="251" y="0" width="1" height="11" fill="#56646a"/><rect x="264" y="0" width="1" height="16" fill="#56646a"/><rect x="277" y="0" width="1" height="11" fill="#56646a"/><rect x="290" y="0" width="1" height="11" fill="#56646a"/><rect x="303" y="0" width="1" height="11" fill="#56646a"/><rect x="316" y="0" width="1" height="11" fill="#56646a"/><rect x="330" y="0" width="1" height="16" fill="#56646a"/><rect x="343" y="0" width="1" height="11" fill="#56646a"/><rect x="356" y="0" width="1" height="11" fill="#56646a"/><rect x="369" y="0" width="1" height="11" fill="#56646a"/><rect x="382" y="0" width="1" height="11" fill="#56646a"/><rect x="395" y="0" width="2" height="16" fill="#5a686e"/><rect x="409" y="0" width="1" height="11" fill="#56646a"/><rect x="422" y="0" width="1" height="11" fill="#56646a"/><rect x="435" y="0" width="1" height="11" fill="#56646a"/><rect x="448" y="0" width="1" height="11" fill="#56646a"/><rect x="461" y="0" width="1" height="16" fill="#56646a"/><rect x="474" y="0" width="1" height="11" fill="#56646a"/><rect x="488" y="0" width="1" height="11" fill="#56646a"/><rect x="501" y="0" width="1" height="11" fill="#56646a"/><rect x="514" y="0" width="1" height="11" fill="#56646a"/><rect x="527" y="0" width="1" height="16" fill="#56646a"/><rect x="540" y="0" width="1" height="11" fill="#56646a"/><rect x="553" y="0" width="1" height="11" fill="#56646a"/><rect x="567" y="0" width="1" height="11" fill="#56646a"/><rect x="580" y="0" width="1" height="11" fill="#56646a"/><rect x="592" y="0" width="2" height="16" fill="#5a686e"/><rect x="606" y="0" width="1" height="11" fill="#56646a"/><rect x="619" y="0" width="1" height="11" fill="#56646a"/><rect x="632" y="0" width="1" height="11" fill="#56646a"/><rect x="646" y="0" width="1" height="11" fill="#56646a"/><rect x="659" y="0" width="1" height="16" fill="#56646a"/><rect x="672" y="0" width="1" height="11" fill="#56646a"/><rect x="685" y="0" width="1" height="11" fill="#56646a"/><rect x="698" y="0" width="1" height="11" fill="#56646a"/><rect x="711" y="0" width="1" height="11" fill="#56646a"/><rect x="725" y="0" width="1" height="16" fill="#56646a"/><rect x="738" y="0" width="1" height="11" fill="#56646a"/><rect x="751" y="0" width="1" height="11" fill="#56646a"/><rect x="764" y="0" width="1" height="11" fill="#56646a"/><rect x="777" y="0" width="1" height="11" fill="#56646a"/><rect x="790" y="0" width="2" height="16" fill="#5a686e"/><rect x="804" y="0" width="1" height="11" fill="#56646a"/><rect x="817" y="0" width="1" height="11" fill="#56646a"/><rect x="830" y="0" width="1" height="11" fill="#56646a"/><rect x="843" y="0" width="1" height="11" fill="#56646a"/><rect x="856" y="0" width="1" height="16" fill="#56646a"/><rect x="870" y="0" width="1" height="11" fill="#56646a"/><rect x="883" y="0" width="1" height="11" fill="#56646a"/><rect x="896" y="0" width="1" height="11" fill="#56646a"/><rect x="909" y="0" width="1" height="11" fill="#56646a"/><rect x="922" y="0" width="1" height="16" fill="#56646a"/><rect x="935" y="0" width="1" height="11" fill="#56646a"/><rect x="949" y="0" width="1" height="11" fill="#56646a"/><rect x="962" y="0" width="1" height="11" fill="#56646a"/><rect x="975" y="0" width="1" height="11" fill="#56646a"/><rect x="988" y="0" width="2" height="16" fill="#5a686e"/><rect x="1001" y="0" width="1" height="11" fill="#56646a"/><rect x="1014" y="0" width="1" height="11" fill="#56646a"/><rect x="1028" y="0" width="1" height="11" fill="#56646a"/><rect x="1041" y="0" width="1" height="11" fill="#56646a"/><rect x="1054" y="0" width="1" height="16" fill="#56646a"/><rect x="1067" y="0" width="1" height="11" fill="#56646a"/><rect x="1080" y="0" width="1" height="11" fill="#56646a"/><rect x="1093" y="0" width="1" height="11" fill="#56646a"/><rect x="1107" y="0" width="1" height="11" fill="#56646a"/><rect x="1120" y="0" width="1" height="16" fill="#56646a"/><rect x="1133" y="0" width="1" height="11" fill="#56646a"/><rect x="1146" y="0" width="1" height="11" fill="#56646a"/><rect x="1159" y="0" width="1" height="11" fill="#56646a"/><rect x="1172" y="0" width="1" height="11" fill="#56646a"/><rect x="1185" y="0" width="2" height="16" fill="#5a686e"/><rect x="1199" y="0" width="1" height="11" fill="#56646a"/><rect x="1212" y="0" width="1" height="11" fill="#56646a"/><rect x="1225" y="0" width="1" height="11" fill="#56646a"/><rect x="1238" y="0" width="1" height="11" fill="#56646a"/><rect x="1251" y="0" width="1" height="16" fill="#56646a"/><rect x="1265" y="0" width="1" height="11" fill="#56646a"/><rect x="1278" y="0" width="1" height="11" fill="#56646a"/><rect x="1291" y="0" width="1" height="11" fill="#56646a"/><rect x="1304" y="0" width="1" height="11" fill="#56646a"/><rect x="1317" y="0" width="1" height="16" fill="#56646a"/><rect x="1330" y="0" width="1" height="11" fill="#56646a"/><rect x="1344" y="0" width="1" height="11" fill="#56646a"/><rect x="1357" y="0" width="1" height="11" fill="#56646a"/><rect x="1370" y="0" width="1" height="11" fill="#56646a"/><rect x="1383" y="0" width="2" height="16" fill="#5a686e"/><rect x="1396" y="0" width="1" height="11" fill="#56646a"/><rect x="1409" y="0" width="1" height="11" fill="#56646a"/><rect x="1423" y="0" width="1" height="11" fill="#56646a"/><rect x="1436" y="0" width="1" height="11" fill="#56646a"/><rect x="1449" y="0" width="1" height="16" fill="#56646a"/><rect x="1462" y="0" width="1" height="11" fill="#56646a"/><rect x="1475" y="0" width="1" height="11" fill="#56646a"/><rect x="1489" y="0" width="1" height="11" fill="#56646a"/><rect x="1502" y="0" width="1" height="11" fill="#56646a"/><rect x="1515" y="0" width="1" height="16" fill="#56646a"/><rect x="1528" y="0" width="1" height="11" fill="#56646a"/><rect x="1541" y="0" width="1" height="11" fill="#56646a"/><rect x="1554" y="0" width="1" height="11" fill="#56646a"/><rect x="1568" y="0" width="1" height="11" fill="#56646a"/><rect x="1580" y="0" width="2" height="16" fill="#5a686e"/><rect x="1594" y="0" width="1" height="11" fill="#56646a"/><rect x="1607" y="0" width="1" height="11" fill="#56646a"/><rect x="1620" y="0" width="1" height="11" fill="#56646a"/><rect x="1633" y="0" width="1" height="11" fill="#56646a"/><rect x="1647" y="0" width="1" height="16" fill="#56646a"/><rect x="1660" y="0" width="1" height="11" fill="#56646a"/><rect x="1673" y="0" width="1" height="11" fill="#56646a"/><rect x="1686" y="0" width="1" height="11" fill="#56646a"/><rect x="1699" y="0" width="1" height="11" fill="#56646a"/></svg>
<div class="rl" style="left:76.0px;top:28px">0:00:00;00</div>
<div class="rl" style="left:273.7px;top:28px">0:00:15;00</div>
<div class="rl" style="left:471.4px;top:28px">0:00:30;00</div>
<div class="rl" style="left:669.1px;top:28px">0:00:45;00</div>
<div class="rl" style="left:866.8px;top:28px">0:01:00;00</div>
<div class="rl" style="left:1064.5px;top:28px">0:01:15;00</div>
<div class="rl" style="left:1262.2px;top:28px">0:01:30;00</div>
<div class="rl" style="left:1459.9px;top:28px">0:01:45;00</div>
<div class="rl" style="left:1657.6px;top:28px">0:02:00;00</div>
<div class="abs" style="left:0;top:43px;width:1782px;height:1px;background:#161a1d"></div>
<div class="abs" style="left:3px;top:6px;width:6px;height:29px;border-radius:3px;background:#15181b"></div>
<div class="abs" style="left:3px;top:25px;width:6px;height:6px;border-radius:50%;background:#d4d7da"></div>
<svg class="abs" style="left:18px;top:9px" width="11" height="25" viewBox="0 0 11 25"><g fill="#7d848b"><path d="M5.500 0.500L8 4H6v2H5V4H3z"/><path d="M5.500 24.500L8 21H6v-2H5v2H3z"/></g><circle cx="4.800" cy="11.500" r="2.300" fill="none" stroke="#7d848b" stroke-width="1"/><path d="M6.500 13.300l2.500 2.700" stroke="#7d848b" stroke-width="1.200"/></svg>
<div class="abs" style="left:39px;top:3px;width:31px;height:16px;border-radius:3px;background:#22272e;border:1px solid #1b1f24"></div>
<svg class="abs" style="left:49px;top:6px" width="11" height="11" viewBox="0 0 11 11"><path d="M5.500 0.500v10M0.500 5.500h10" stroke="#fff" stroke-width="1.800"/></svg>
<div class="abs" style="left:39px;top:24px;width:31px;height:16px;border-radius:3px;background:#363d45"></div>
<svg class="abs" style="left:49px;top:28px" width="11" height="8" viewBox="0 0 11 8"><path d="M1 6.500L5.500 2 10 6.500" fill="none" stroke="#e6e8ea" stroke-width="2"/></svg>
<div class="abs" style="left:0;top:44px;width:1782px;height:16px;background:#22272e"></div>
<div class="abs" style="left:0;top:44px;width:74px;height:16px;background:linear-gradient(90deg,#252a30 0,#2b3138 28px)"></div>
<div class="abs" style="left:0;top:46px;width:70px;height:13px;border-radius:0 3px 3px 0;background:#363d45"></div>
<div class="abs" style="left:1px;top:44px;font-size:13px;color:#e6e8ea">Quiz</div>
<svg class="abs" style="left:60px;top:47px" width="7" height="11" viewBox="0 0 7 11"><path d="M3.500 0.500L6 4H1zM3.500 10.500L6 7H1z" fill="#9aa0a6"/></svg>
<div class="abs" style="left:0;top:60px;width:74px;height:62px;background:linear-gradient(90deg,#252a30 0,#2b3138 28px)"></div>
<div class="abs" style="left:0;top:122px;width:73.500px;height:98px;background:#363d45"></div>
<div class="abs" style="left:0;top:121px;width:74px;height:1px;background:#1b1f24"></div>
<div class="abs" style="left:0;top:169px;width:74px;height:1px;background:#1b1f24"></div>
<div class="abs" style="left:73px;top:0;width:1.500px;height:44px;background:#1b1f24"></div>
<div class="abs" style="left:75px;top:121px;width:1707px;height:1px;background:#23282e"></div>
<div class="abs" style="left:75px;top:169px;width:1707px;height:1px;background:#23282e"></div>
<svg class="abs" style="left:50.500px;top:128px" width="14" height="9" viewBox="0 0 14 9"><path d="M0.500 4.500C2.500 1.500 4.500 0.500 7 0.500s4.500 1 6.500 4C11.500 7.500 9.500 8.500 7 8.500S2.500 7.500 0.500 4.500z" fill="#15181b"/><circle cx="7" cy="4.500" r="2.200" fill="#363d45"/><circle cx="7" cy="4.500" r="1.100" fill="#15181b"/></svg>
<svg class="abs" style="left:52.700px;top:151px" width="10" height="14" viewBox="0 0 10 14"><path d="M2.500 6V3.500C2.500 1.800 3.500 1 5 1s2.500.8 2.500 2.500" fill="none" stroke="#15181b" stroke-width="1.500"/><rect x="0.800" y="6" width="8.400" height="7.500" rx="1" fill="#15181b"/><rect x="4.300" y="8.500" width="1.400" height="3" fill="#363d45"/></svg>
<svg class="abs" style="left:50.500px;top:176px" width="14" height="9" viewBox="0 0 14 9"><path d="M0.500 4.500C2.500 1.500 4.500 0.500 7 0.500s4.500 1 6.500 4C11.500 7.500 9.500 8.500 7 8.500S2.500 7.500 0.500 4.500z" fill="#15181b"/><circle cx="7" cy="4.500" r="2.200" fill="#363d45"/><circle cx="7" cy="4.500" r="1.100" fill="#15181b"/></svg>
<svg class="abs" style="left:52.700px;top:199px" width="10" height="14" viewBox="0 0 10 14"><path d="M2.500 6V3.500C2.500 1.800 3.500 1 5 1s2.500.8 2.500 2.500" fill="none" stroke="#15181b" stroke-width="1.500"/><rect x="0.800" y="6" width="8.400" height="7.500" rx="1" fill="#15181b"/><rect x="4.300" y="8.500" width="1.400" height="3" fill="#363d45"/></svg>
<div class="abs" style="left:4px;top:139px;font-weight:bold;font-size:11px;color:#e6e8ea;white-space:nowrap;letter-spacing:0.200px">Track 2</div>
<div class="abs" style="left:4px;top:187px;font-weight:bold;font-size:11px;color:#e6e8ea;white-space:nowrap;letter-spacing:0.200px">Track 1</div>
<div class="abs" style="left:74.200px;top:171px;width:993.800px;height:44px;border-radius:5px;background:#22272e;border:1px solid #46525c"></div>
<div class="abs" style="left:75.500px;top:187.500px;width:991.500px;height:26.500px;border-radius:0 0 4px 4px;background:#363d45"></div>
<svg class="abs" style="left:76px;top:198px" width="100" height="16" viewBox="0 0 100 16"><path d="M0.0 16L0.0 5.8L1.0 8.6L1.0 5.0L2.0 7.8L2.0 6.7L3.0 8.3L3.0 2.4L4.0 3.2L4.0 3.2L5.0 6.2L5.0 16zM5.0 16L5.0 9.9L6.0 11.2L6.0 10.7L7.0 12.1L7.0 10.6L8.0 10.7L8.0 9.3L9.0 9.7L9.0 9.4L10.0 11.0L10.0 10.4L11.0 11.0L11.0 9.5L12.0 9.8L12.0 9.2L13.0 11.1L13.0 9.8L14.0 10.4L14.0 10.0L15.0 11.5L15.0 10.1L16.0 11.7L16.0 9.1L17.0 9.4L17.0 9.9L18.0 11.2L18.0 9.2L19.0 10.1L19.0 9.2L20.0 9.5L20.0 10.0L21.0 11.0L21.0 9.8L22.0 10.9L22.0 10.7L23.0 11.8L23.0 9.4L24.0 11.3L24.0 10.9L25.0 11.5L25.0 10.4L26.0 11.2L26.0 10.1L27.0 11.2L27.0 9.0L28.0 10.7L28.0 10.2L29.0 11.6L29.0 9.7L30.0 11.1L30.0 10.3L31.0 10.7L31.0 10.4L32.0 11.1L32.0 9.2L33.0 11.0L33.0 10.9L34.0 12.1L34.0 9.5L35.0 10.2L35.0 10.5L36.0 11.6L36.0 10.6L37.0 11.5L37.0 10.9L38.0 11.4L38.0 16zM38.0 16L38.0 7.4L39.0 7.5L39.0 8.1L40.0 8.2L40.0 10.9L41.0 12.0L41.0 7.1L42.0 7.7L42.0 16zM50.0 16L50.0 5.9L51.0 6.1L51.0 4.9L52.0 5.5L52.0 6.5L53.0 8.8L53.0 5.8L54.0 8.4L54.0 6.1L55.0 6.2L55.0 6.3L56.0 9.2L56.0 7.8L57.0 9.8L57.0 4.1L58.0 6.4L58.0 6.5L59.0 9.1L59.0 3.1L60.0 5.3L60.0 7.0L61.0 9.5L61.0 7.7L62.0 9.8L62.0 4.6L63.0 7.5L63.0 7.8L64.0 9.0L64.0 6.8L65.0 6.8L65.0 7.4L66.0 8.6L66.0 4.1L67.0 6.2L67.0 3.1L68.0 5.1L68.0 6.8L69.0 8.4L69.0 7.8L70.0 9.2L70.0 6.8L71.0 7.1L71.0 3.8L72.0 5.7L72.0 7.8L73.0 9.7L73.0 6.8L74.0 9.0L74.0 6.8L75.0 7.2L75.0 7.3L76.0 9.8L76.0 3.4L77.0 5.0L77.0 3.0L78.0 5.4L78.0 3.5L79.0 4.8L79.0 4.0L80.0 5.0L80.0 5.5L81.0 8.4L81.0 6.9L82.0 7.3L82.0 3.5L83.0 3.8L83.0 6.3L84.0 7.3L84.0 4.0L85.0 5.3L85.0 3.9L86.0 5.6L86.0 4.7L87.0 5.8L87.0 6.7L88.0 6.9L88.0 3.2L89.0 6.8L89.0 3.1L90.0 3.3L90.0 16zM90.0 16L90.0 11.0L91.0 12.4L91.0 10.3L92.0 11.8L92.0 10.1L93.0 10.7L93.0 12.8L94.0 13.6L94.0 11.1L95.0 11.7L95.0 16z" fill="#8a8a8a"/></svg>
<div class="abs" style="left:80px;top:188px;width:34px;height:21px;background:#fff"></div>
<div class="abs" style="left:124px;top:189px;font-size:14.500px;color:#f2f3f4;white-space:nowrap;text-shadow:0 0 2px #000,0 0 1px #000;letter-spacing:0.250px">Rec 3-5-2020</div>
<div class="abs" style="left:367px;top:0;width:10px;height:13px;background:#5e9a2e;border:1px solid #84c347"></div>
<svg class="abs" style="left:369px;top:3px" width="6" height="7" viewBox="0 0 6 7"><path d="M0.500 0v7M3 0v7M5.500 0v7" stroke="#84c347" stroke-width="0.800"/></svg>
<div class="abs" style="left:403px;top:0;width:9px;height:13px;background:#b3212c;border:1px solid #d5434e"></div>
<svg class="abs" style="left:405px;top:3px" width="6" height="7" viewBox="0 0 6 7"><path d="M0.500 0v7M3 0v7M5.500 0v7" stroke="#d5434e" stroke-width="0.800"/></svg>
<svg class="abs" style="left:376px;top:0" width="28" height="23" viewBox="0 0 28 23"><path d="M0.500 0.500h26.500v12.500L13.700 21.500 0.500 13z" fill="#527b83" stroke="#7fa3a9" stroke-width="1"/></svg>
<div class="abs" style="left:418.500px;top:0;font-size:11px;color:#e6e8ea;white-space:nowrap">0:00:23;27</div>
<div class="abs" style="left:389px;top:21px;width:1.300px;height:23px;background:#d8dadc"></div>
<div class="abs" style="left:388.800px;top:44px;width:1.500px;height:172px;background:#2fc15b"></div>
<svg class="abs" style="left:388px;top:43px" width="46" height="24" viewBox="0 0 46 24"><path d="M1.500 1h38c2.500 0 4 1.500 4 4v7c0 2.500-1.500 4-4 4H8L1.500 22z" fill="#2fc15b" stroke="#d2de2a" stroke-width="1"/></svg>
<div class="abs" style="left:393px;top:43px;font-size:12px;color:#fff;white-space:nowrap;text-shadow:0 0 1px #fff">Quiz 1</div>
</div>

</div>
</body>
</html>
